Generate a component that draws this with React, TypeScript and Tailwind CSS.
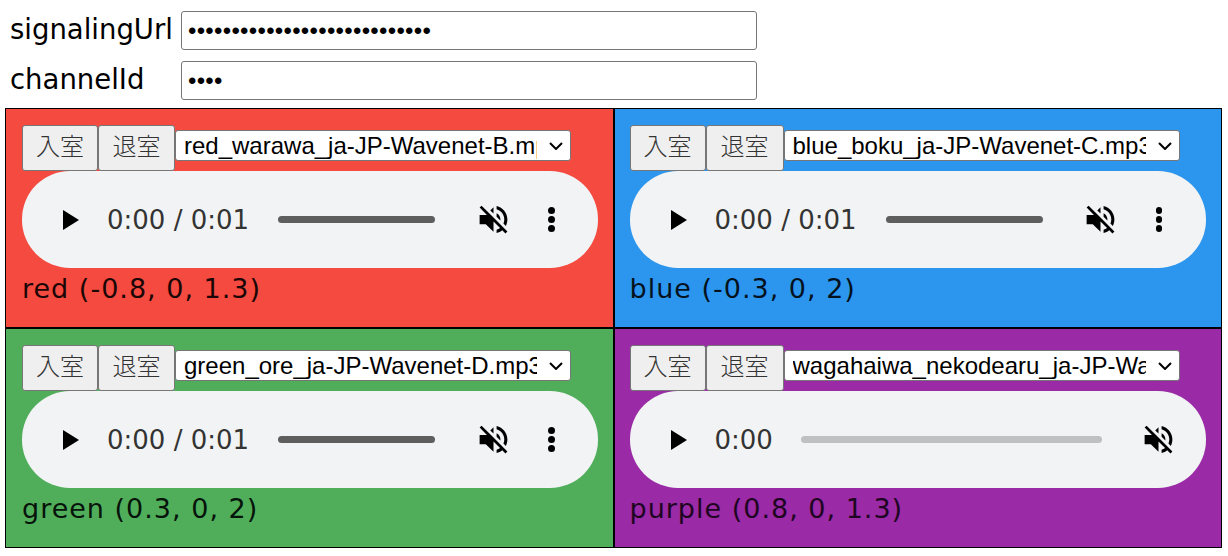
import React from 'react';

interface Speaker {
  name: string;
  pos: string;
  file: string;
  bg: string;
  text: string;
  pad: string;
  leaveWidth: string;
  loaded: boolean;
}

const speakers: Speaker[] = [
  { name: 'red', pos: '(-0.8, 0, 1.3)', file: 'red_warawa_ja-JP-Wavenet-B.mp3', bg: 'bg-[#f44a40]', text: 'text-[#1b0605]', pad: 'pl-[16px]', leaveWidth: 'w-[77px]', loaded: true },
  { name: 'blue', pos: '(-0.3, 0, 2)', file: 'blue_boku_ja-JP-Wavenet-C.mp3', bg: 'bg-[#2c96ef]', text: 'text-[#04121e]', pad: 'pl-[15px]', leaveWidth: 'w-[78px]', loaded: true },
  { name: 'green', pos: '(0.3, 0, 2)', file: 'green_ore_ja-JP-Wavenet-D.mp3', bg: 'bg-[#50ae5a]', text: 'text-[#06130a]', pad: 'pl-[16px]', leaveWidth: 'w-[77px]', loaded: true },
  { name: 'purple', pos: '(0.8, 0, 1.3)', file: 'wagahaiwa_nekodearu_ja-JP-Wavenet-A.mp3', bg: 'bg-[#9a2aa6]', text: 'text-[#1e0521]', pad: 'pl-[15px]', leaveWidth: 'w-[78px]', loaded: false },
];

const bodyFont = "font-['DejaVu_Sans','Noto_Sans_CJK_JP',sans-serif]";

const MuteIcon = () => (
  <svg viewBox="0 0 24 24" className="h-[37px] w-[37px] fill-black">
    <path d="M16.5 12c0-1.77-1.02-3.29-2.5-4.03v2.21l2.45 2.45c.03-.2.05-.41.05-.63zm2.5 0c0 .94-.2 1.82-.54 2.64l1.51 1.51C20.63 14.91 21 13.5 21 12c0-4.28-2.99-7.86-7-8.77v2.06c2.89.86 5 3.54 5 6.71zM4.27 3L3 4.27 7.73 9H3v6h4l5 5v-6.73l4.25 4.25c-.67.52-1.42.93-2.25 1.18v2.06c1.38-.31 2.63-.95 3.69-1.81L19.73 21 21 19.73l-9-9L4.27 3zM12 4L9.91 6.09 12 8.18V4z" />
  </svg>
);

const Player = ({ loaded }: { loaded: boolean }) => (
  <div className={`flex h-[97px] w-[576px] items-center rounded-[48px] bg-[#f1f3f4] text-[#333] ${bodyFont}`}>
    <svg viewBox="0 0 18 24" className="ml-[40px] h-[24px] w-[18px] fill-black">
      <path d="M1 2l16 10L1 22z" />
    </svg>
    {loaded ? (
      <>
        <span className="ml-[27px] w-[141px] text-[26px] leading-[30px] whitespace-nowrap">0:00 / 0:01</span>
        <div className="ml-[30px] h-[7px] w-[157px] rounded-full bg-[#5e5e5e]" />
        <div className="ml-[39.5px]"><MuteIcon /></div>
        <div className="ml-[36.5px] flex flex-col gap-[2.5px]">
          <span className="h-[6.5px] w-[6.5px] rounded-full bg-black" />
          <span className="h-[6.5px] w-[6.5px] rounded-full bg-black" />
          <span className="h-[6.5px] w-[6.5px] rounded-full bg-black" />
        </div>
      </>
    ) : (
      <>
        <span className="ml-[27px] w-[57px] text-[26px] leading-[30px] whitespace-nowrap">0:00</span>
        <div className="ml-[29px] h-[7px] w-[301px] rounded-full bg-[#bfc0c2]" />
        <div className="ml-[38.5px]"><MuteIcon /></div>
      </>
    )}
  </div>
);

const RoomButton = ({ label, width }: { label: string; width: string }) => (
  <button className={`h-[46px] ${width} rounded-[3px] border border-[#767676] bg-[#efefef] pb-[7px] font-['Noto_Sans_CJK_JP',sans-serif] text-[24px] font-light text-[#333]`}>
    {label}
  </button>
);

const SpeakerCell = ({ s }: { s: Speaker }) => (
  <div className={`h-[220px] border border-black pt-[16px] ${s.pad} ${s.bg}`}>
    <div className="flex h-[46px] items-start">
      <RoomButton label="入室" width="w-[76px]" />
      <RoomButton label="退室" width={s.leaveWidth} />
      <div className="relative mt-[5px] h-[31px] w-[396px]">
        <select
          defaultValue={s.file}
          className="h-[31px] w-[396px] appearance-none rounded-[3px] border border-[#767676] bg-white py-0 pr-[33px] pl-[8px] font-['Liberation_Sans',sans-serif] text-[24px] leading-[28px] text-black"
        >
          <option>{s.file}</option>
        </select>
        <svg viewBox="0 0 14 8" className="pointer-events-none absolute top-[12px] right-[8px] h-[8px] w-[14px] fill-none stroke-black stroke-2">
          <path d="M1 1l6 6 6-6" />
        </svg>
      </div>
    </div>
    <Player loaded={s.loaded} />
    <p className={`mt-[2px] text-[27px] leading-[37px] tracking-[1px] whitespace-nowrap ${s.text} ${bodyFont}`}>
      {s.name} {s.pos}
    </p>
  </div>
);

const Field = ({ label, len }: { label: string; len: number }) => (
  <div className="flex h-[39px] items-center pl-[10px]">
    <label className={`w-[171px] pb-[2px] text-[27.5px] text-black ${bodyFont}`}>{label}</label>
    <input
      type="password"
      readOnly
      value={'x'.repeat(len)}
      className="h-[39px] w-[576px] rounded-[3px] border border-[#767676] bg-white px-[6px] font-['Liberation_Sans',sans-serif] text-[24px] tracking-[0.28px] text-black"
    />
  </div>
);

export default function App() {
  return (
    <div className="h-[556px] w-[1228px] overflow-hidden bg-white pt-[11px]">
      <div className="flex flex-col gap-[11px]">
        <Field label="signalingUrl" len={28} />
        <Field label="channelId" len={4} />
      </div>
      <div className="mt-[8px] ml-[5px] grid w-[1217px] grid-cols-2">
        {speakers.map((s) => (
          <SpeakerCell key={s.name} s={s} />
        ))}
      </div>
    </div>
  );
}
